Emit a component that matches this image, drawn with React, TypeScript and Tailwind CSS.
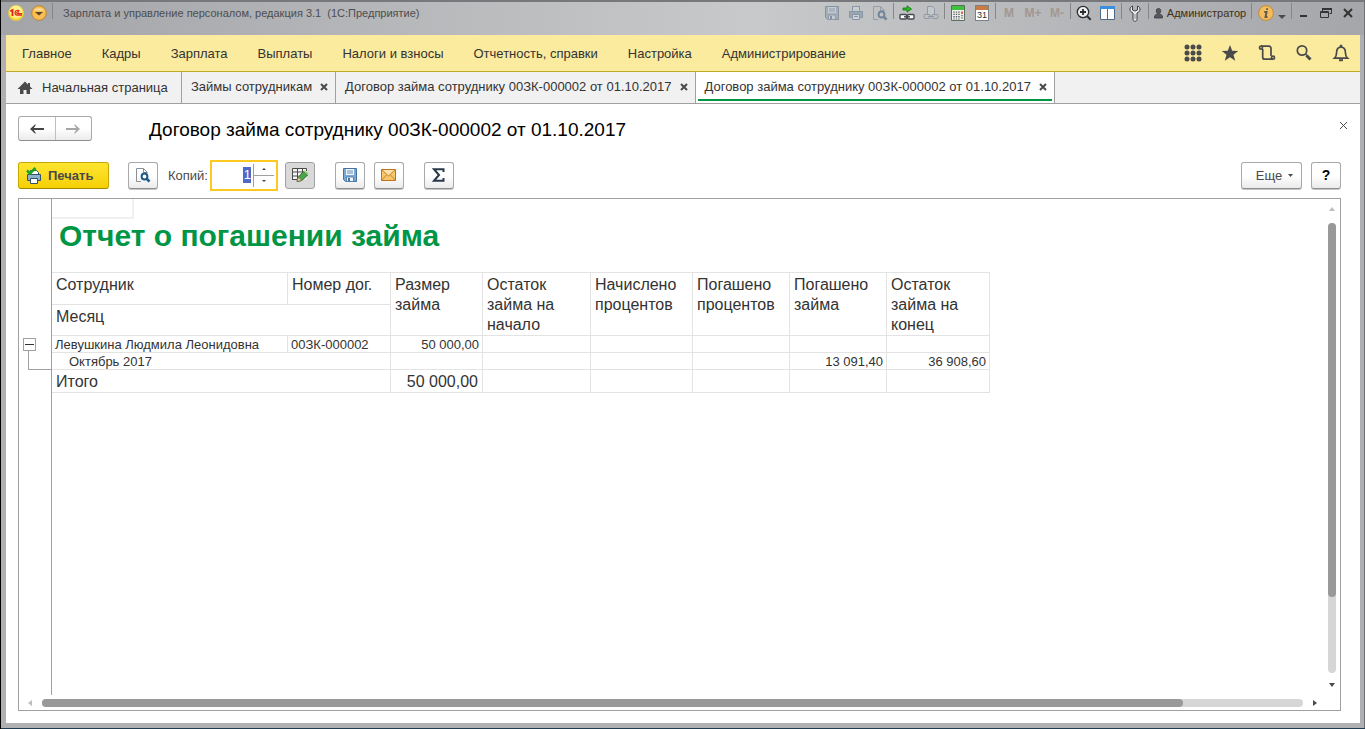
import { ReactNode, useState } from "react";

const SECTIONS = [
  "Главное",
  "Кадры",
  "Зарплата",
  "Выплаты",
  "Налоги и взносы",
  "Отчетность, справки",
  "Настройка",
  "Администрирование",
];

const LOAN = "Договор займа сотруднику 00ЗК-000002 от 01.10.2017";

const TABS = ["Займы сотрудникам", LOAN, LOAN];

const BTN =
  "flex items-center justify-center h-[27px] border border-[#a9a9a9] border-b-[#8f8f8f] rounded-[3px] bg-linear-to-b from-white from-50% to-[#ebebeb] shadow-[0_1px_0_#c4c4c4]";

function Sep() {
  return <span className="w-px h-4 mx-px -mt-1 bg-[#85868a] shrink-0" />;
}

function TitleButton({ label, children }: { label: string; children: ReactNode }) {
  return (
    <button aria-label={label} className="w-6 h-[22px] flex items-center justify-center shrink-0">
      {children}
    </button>
  );
}

function Floppy({ body, dark, paper }: { body: string; dark: string; paper: string }) {
  return (
    <svg width="16" height="16" viewBox="0 0 16 16">
      <path d="M1.5 1.5h13v13h-11l-2-2z" fill={body} stroke={dark} />
      <path d="M4 2h8v6H4z" fill={paper} />
      <path d="M5 4h6M5 6h6" stroke={dark} strokeWidth=".8" />
      <path d="M4.5 10h7v4.500h-7z" fill={paper} stroke={dark} strokeWidth=".8" />
      <path d="M6 11h2v3H6z" fill={dark} />
    </svg>
  );
}

function Sheet({ stroke, lens }: { stroke: string; lens: string }) {
  return (
    <svg width="16" height="16" viewBox="0 0 16 16" fill="none">
      <path d="M6 14.500H1.500v-13h7l4 4V6M8.500 1.500v4h4" stroke={stroke} />
      <circle cx="9.500" cy="9.500" r="2.900" stroke={lens} strokeWidth="2" />
      <path d="M11.500 11.500l3 3.200" stroke={lens} strokeWidth="2.600" />
    </svg>
  );
}

function Printer() {
  return (
    <svg width="16" height="16" viewBox="0 0 16 16" fill="none" stroke="#8795a5">
      <path d="M4.500 5.500v-4h7v4" fill="#c9ced3" />
      <path d="M3.500 12.500h-2v-6h13v6h-2" fill="#9aa6b2" />
      <path d="M4.500 9.500h7v5h-7zM6 11.500h4" fill="#cdd2d6" />
    </svg>
  );
}

function TitleBar() {
  return (
    <header className="h-[35px] shrink-0 flex items-start pl-[7px] pr-[5px] border-t-2 border-[#77787b] bg-linear-to-r from-[#a3a4a8] via-[#c8c9ca] via-55% to-[#a5a6aa]">
      <button aria-label="Меню 1С" className="w-[18px] h-[22px] flex items-center">
        <svg width="16" height="16" viewBox="0 0 16 16">
          <circle cx="8" cy="8" r="7.800" fill="#f5d433" />
          <circle cx="8" cy="7" r="6.500" fill="#fff18a" />
          <path d="M2.300 6.300L4.500 5v6" fill="none" stroke="#e1241b" strokeWidth="1.800" />
          <path
            d="M11.500 6.200A2.500 2.500 0 1 0 9 10.200h5M10.700 7.500A1 1 0 1 0 9.500 8.700H14"
            fill="none"
            stroke="#e1241b"
            strokeWidth="1.200"
          />
        </svg>
      </button>
      <button aria-label="Главное меню" className="ml-[5px] h-[22px] flex items-center">
        <svg width="16" height="16" viewBox="0 0 16 16">
          <circle cx="8" cy="8" r="7.300" fill="#f9bd55" stroke="#b98532" />
          <path d="M3 5.500a5.500 4 0 0 1 10 0" fill="#fde0a0" />
          <path d="M4 7h8l-4 3.500z" fill="#5a4420" />
        </svg>
      </button>
      <span className="w-px h-4 mt-px ml-[5px] bg-[#85868a]" />
      <span className="ml-2.5 text-[11px] leading-[22px] text-[#4c4d50] whitespace-pre">
        Зарплата и управление персоналом, редакция 3.1  (1С:Предприятие)
      </span>

      <div className="ml-auto flex items-center text-[11px]">
        <TitleButton label="Сохранить">
          <Floppy body="#a4afba" dark="#8492a2" paper="#c6cbd0" />
        </TitleButton>
        <TitleButton label="Печать">
          <Printer />
        </TitleButton>
        <TitleButton label="Предварительный просмотр">
          <Sheet stroke="#929eab" lens="#73869a" />
        </TitleButton>
        <Sep />
        <TitleButton label="Получить ссылку">
          <svg width="16" height="16" viewBox="0 0 16 16" fill="none">
            <path d="M4 3h4V.800L12.500 4 8 7.200V5H4z" fill="#25c11a" stroke="#14720c" strokeWidth=".8" />
            <rect x="1" y="9.500" width="6.500" height="4.500" rx="1" fill="#fff" stroke="#45494f" strokeWidth="1.400" />
            <rect x="8.500" y="9.500" width="6.500" height="4.500" rx="1" fill="#fff" stroke="#45494f" strokeWidth="1.400" />
            <path d="M5 11.800h6" stroke="#45494f" strokeWidth="1.400" />
          </svg>
        </TitleButton>
        <TitleButton label="Перейти по ссылке">
          <svg width="16" height="16" viewBox="0 0 16 16" fill="none" stroke="#8f9aa6">
            <path d="M4.500 9V1.500h5l2 2V9" fill="#c3c8cd" />
            <rect x="1" y="9.500" width="6" height="4" rx="1" />
            <rect x="9" y="9.500" width="6" height="4" rx="1" />
            <path d="M5 11.500h6" />
          </svg>
        </TitleButton>
        <Sep />
        <TitleButton label="Калькулятор">
          <svg width="14" height="16" viewBox="0 0 14 16">
            <path d="M.5.5h13v15H.5z" fill="#f0f1ec" stroke="#59705a" />
            <path d="M1 1h12v4H1z" fill="#3fc23d" />
            <path d="M3 6.500v8M5.500 6.500v8M8 6.500v8" stroke="#5b6068" strokeWidth="1.400" strokeDasharray="1.300 1" />
            <path d="M11 6.500v2.500" stroke="#e0372c" strokeWidth="1.500" />
            <path d="M11 10v4.500" stroke="#5b6068" strokeWidth="1.400" strokeDasharray="1.300 1" />
          </svg>
        </TitleButton>
        <TitleButton label="Календарь">
          <span className="w-3.5 h-4 flex flex-col border border-[#7d8087] bg-white text-[9px] leading-[11px] text-[#333] text-center">
            <span className="h-1 shrink-0 bg-[#c87c44]" />
            31
          </span>
        </TitleButton>
        <Sep />
        {["M", "M+", "M-"].map((m) => (
          <button key={m} className="w-6 h-[22px] shrink-0 text-xs font-bold text-[#a3978f]">
            {m}
          </button>
        ))}
        <Sep />
        <TitleButton label="Масштаб">
          <svg width="16" height="16" viewBox="0 0 16 16" fill="none" stroke="#2b2d30">
            <circle cx="7" cy="7" r="5.700" fill="#eceded" strokeWidth="1.300" />
            <path d="M4 7h6M7 4v6" strokeWidth="1.800" />
            <path d="M11.200 11.200l3.500 3.500" strokeWidth="2" />
          </svg>
        </TitleButton>
        <TitleButton label="Панели">
          <svg width="16" height="14" viewBox="0 0 16 14">
            <path d="M.5.5h14v13H.5z" fill="#fff" stroke="#4d6b86" />
            <path d="M0 0h15v3H0z" fill="#3b8fdc" />
            <path d="M7.500 3v10" stroke="#4d6b86" />
          </svg>
        </TitleButton>
        <Sep />
        <TitleButton label="Сервис и настройки">
          <svg width="14" height="17" viewBox="0 0 14 17">
            <path
              d="M4.500 1C2.500 1.800 1.500 3.300 2.200 5.500c.4 1.200 1.500 1.800 2.800 2.500v6.500c0 2.300 4 2.300 4 0V8c1.300-.7 2.400-1.300 2.800-2.500C12.500 3.300 11.500 1.800 9.500 1v4L7 6 4.500 5z"
              fill="#e9eaeb"
              stroke="#3b3e42"
            />
            <path d="M7 9v5" stroke="#83868a" />
          </svg>
        </TitleButton>
        <Sep />
        <button className="flex items-center h-[22px] w-[100px] justify-center gap-1 text-[11px] text-[#3f2f14]">
          <svg width="9" height="11" viewBox="0 0 9 11" fill="#55585c" stroke="#3a3c3f" strokeWidth=".8">
            <path d="M4.500.5c3 0 2.600 3.700 1.200 5 0 1.200 2.800.8 2.800 3.500v1h-8V9c0-2.700 2.800-2.300 2.800-3.500C1.900 4.200 1.500.5 4.500.5z" />
          </svg>
          Администратор
        </button>
        <Sep />
        <button aria-label="Справка" className="flex items-center h-[22px] w-[37px] justify-center gap-1">
          <svg width="16" height="16" viewBox="0 0 16 16">
            <circle cx="8" cy="8" r="7.400" fill="#f5bc5c" stroke="#c08b3a" />
            <path d="M9.300 3.300L9 4.900M6.300 7h2.300l-1.100 5h2" fill="none" stroke="#5c5a55" strokeWidth="1.900" />
          </svg>
          <svg width="8" height="4" viewBox="0 0 8 4" className="mt-2">
            <path d="M0 0h8L4 4z" fill="#4a4b4e" />
          </svg>
        </button>
        <Sep />
        <div className="flex items-center">
          <button aria-label="Свернуть" className="w-[22px] h-[22px] flex items-center justify-center">
            <svg width="8" height="12" viewBox="0 0 8 12">
              <path d="M0 9h7" stroke="#333" strokeWidth="2" />
            </svg>
          </button>
          <button aria-label="Развернуть" className="w-[22px] h-[22px] flex items-center justify-center">
            <svg width="12" height="10" viewBox="0 0 12 10" fill="none" stroke="#333">
              <path d="M2.500 3V.5h9v5h-2" />
              <path d="M2 1h10" strokeWidth="2" />
              <path d="M.5 3.500h8v6h-8zM0 4.500h9" />
            </svg>
          </button>
          <button aria-label="Закрыть" className="w-[22px] h-[22px] flex items-center justify-center">
            <svg width="10" height="10" viewBox="0 0 10 10" stroke="#333" strokeWidth="2">
              <path d="M1 1l8 8M9 1L1 9" />
            </svg>
          </button>
        </div>
      </div>
    </header>
  );
}

function SectionBar() {
  return (
    <nav className="h-[37px] shrink-0 flex items-center justify-between pl-4 pr-2.5 bg-[#fbeb9e] border-b border-[#bda827]">
      <ul className="flex gap-[30px] pt-px text-[13px] text-[#333]">
        {SECTIONS.map((s) => (
          <li key={s}>
            <a href="#" className="whitespace-nowrap">
              {s}
            </a>
          </li>
        ))}
      </ul>
      <div className="flex items-center gap-[19px] text-[#4a4a4a]">
        <button aria-label="Меню функций">
          <svg width="18" height="18" viewBox="0 0 18 18" fill="#4a4a4a">
            {[3, 9, 15].map((y) => [3, 9, 15].map((x) => <circle key={x + "-" + y} cx={x} cy={y} r="2.500" />))}
          </svg>
        </button>
        <button aria-label="Избранное">
          <svg width="18" height="18" viewBox="0 0 18 18" fill="#4a4a4a">
            <path d="M9 1l2.200 5.800 6 .200-4.700 3.700 1.700 6L9 13.300l-5.200 3.400 1.700-6L.800 7l6-.200z" />
          </svg>
        </button>
        <button aria-label="История">
          <svg width="18" height="18" viewBox="0 0 18 18" fill="none" stroke="#4a4a4a" strokeWidth="1.700">
            <path d="M4.700 5v8.200a2 2 0 0 0 2 2H15" />
            <path d="M3 2.200h8a2 2 0 0 1 2 2V12" />
            <circle cx="3" cy="3.700" r="1.500" />
            <circle cx="15" cy="13.700" r="1.500" />
          </svg>
        </button>
        <button aria-label="Поиск">
          <svg width="18" height="18" viewBox="0 0 18 18" fill="none" stroke="#4a4a4a">
            <circle cx="7" cy="6.500" r="4.700" strokeWidth="1.700" />
            <path d="M10.500 10l1.500 1.500" strokeWidth="1.500" />
            <path d="M11.500 11.500l4 4" strokeWidth="3" />
          </svg>
        </button>
        <button aria-label="Оповещения">
          <svg width="18" height="18" viewBox="0 0 18 18" fill="none" stroke="#4a4a4a" strokeWidth="1.700">
            <path d="M2.500 14.200h13c-1.800-1.700-2-2.800-2-5C13.500 5 12 3.200 9 3.200S4.500 5 4.500 9.200c0 2.200-.2 3.300-2 5z" />
            <path d="M9 .8V3" strokeWidth="2.500" />
            <path d="M7 16.200h4" strokeWidth="2" />
          </svg>
        </button>
      </div>
    </nav>
  );
}

function TabBar() {
  const [active, setActive] = useState(2);

  return (
    <div className="h-8 shrink-0 flex bg-[#f1f1f1] text-[13px] text-[#333]">
      <button className="flex items-center gap-[9px] w-44 pl-[11px] border-r border-b border-[#a0a0a0] whitespace-nowrap">
        <svg width="16" height="14" viewBox="0 0 16 14" fill="#4a4a4a">
          <path d="M8 .500L.500 8H3v5h3.500V9h3v4H13V8h2.500L13 5.500V2h-2v1.500z" />
        </svg>
        Начальная страница
      </button>
      {TABS.map((t, i) => (
        <div key={i} className={`flex flex-col px-0.5 border-r border-b border-[#a0a0a0] ${i === active ? "bg-white" : ""}`}>
          <div className="flex-1 flex items-center gap-2 pt-[3px] pl-[7px] pr-[5px]">
            <button onClick={() => setActive(i)} className="whitespace-nowrap">
              {t}
            </button>
            <button aria-label="Закрыть вкладку">
              <svg width="8" height="8" viewBox="0 0 8 8" stroke="#4a4a4a" strokeWidth="2">
                <path d="M1 1l6 6M7 1L1 7" />
              </svg>
            </button>
          </div>
          <div className={`h-0.5 mb-0.5 ${i === active ? "bg-[#009646]" : ""}`} />
        </div>
      ))}
      <div className="flex-1 border-b border-[#a0a0a0]" />
    </div>
  );
}

function Toolbar() {
  const [copies, setCopies] = useState("1");

  return (
    <div className="flex items-center h-[30px] text-[13px] text-[#4a4a4a]">
      <button className="flex items-center gap-1.5 w-[91px] h-[27px] pl-[7px] border border-[#c9a900] border-b-[#a08600] rounded-[3px] bg-linear-to-b from-[#ffe52e] to-[#f5d000] font-bold">
        <svg width="16" height="17" viewBox="0 0 16 17" fill="none">
          <path d="M4.500 8V3.500h6l2 2V8" fill="#fff" stroke="#33506b" />
          <path d="M1.500 13.500v-6h13v6z" fill="#8fb2cc" stroke="#33506b" />
          <path d="M4.500 11.500h7v5h-7z" fill="#fff" stroke="#33506b" />
          <path d="M1 3.500l3 3L9.500 1" stroke="#16a51e" strokeWidth="2.600" />
        </svg>
        <span className="pt-px">Печать</span>
      </button>
      <button aria-label="Просмотр" className={`${BTN} w-[30px] ml-[19px]`}>
        <Sheet stroke="#8a9096" lens="#1c5a85" />
      </button>
      <label htmlFor="copies" className="ml-2.5 pt-px whitespace-nowrap">
        Копий:
      </label>
      <div className="flex w-[68px] h-[31px] ml-0.5 border-2 border-[#fcc921] bg-white">
        <div className="flex-1 flex items-center justify-end">
          <input
            id="copies"
            value={copies}
            onChange={(e) => setCopies(e.target.value)}
            className="w-2 h-4 bg-[#4f69c6] text-white text-right outline-none"
          />
        </div>
        <div className="flex flex-col w-[21px] my-0.5 ml-0.5 mr-0.5 border-l border-[#a0a0a0]">
          <button aria-label="Больше" className="flex-1 flex items-center justify-center border-b border-[#a0a0a0]">
            <svg width="4" height="2" viewBox="0 0 4 2" fill="#444">
              <path d="M0 2h4L2 0z" />
            </svg>
          </button>
          <button aria-label="Меньше" className="flex-1 flex items-center justify-center">
            <svg width="4" height="2" viewBox="0 0 4 2" fill="#444">
              <path d="M0 0h4L2 2z" />
            </svg>
          </button>
        </div>
      </div>
      <button
        aria-label="Редактирование"
        className="flex items-center justify-center w-[30px] h-[27px] ml-[7px] border border-[#a0a0a0] rounded-[3px] bg-[#d9d9d9]"
      >
        <svg width="18" height="16" viewBox="0 0 18 16" fill="none">
          <path d="M1.500 1.500h14v11h-14z" fill="#f4f4f4" />
          <path d="M1.500 13V1.500h14V4M1.500 5h10M1.500 9h6M6.500 1.500V12M11.500 1.500v4M1.500 12.500h5" stroke="#4a4a4a" />
          <path d="M6 14.500l1.500-4.500 5-5.500 4 3.500-5.500 5.500z" fill="#4aa64a" stroke="#28662b" />
          <path d="M6 14.500l1.300-4.200 3.500 3z" fill="#f1d4a8" stroke="#7c6345" strokeWidth=".6" />
          <path d="M12.500 4.500l4 3.500 1-1.500-3.700-3.200z" fill="#8fce7c" />
        </svg>
      </button>
      <button aria-label="Сохранить файл" className={`${BTN} w-[30px] ml-5`}>
        <Floppy body="#7fa8d0" dark="#4274a3" paper="#f1f5f9" />
      </button>
      <button aria-label="Отправить" className={`${BTN} w-[30px] ml-[9px]`}>
        <svg width="15" height="12" viewBox="0 0 15 12">
          <path d="M.5.5h14v11H.5z" fill="#f8c66b" stroke="#b87420" />
          <path d="M1.800 1h11.400L7.500 6.500z" fill="#fde3ad" />
          <path d="M1 1l6.500 6L14 1M1 11l4.500-5M14 11L9.500 6" fill="none" stroke="#b87420" strokeWidth=".8" />
        </svg>
      </button>
      <button aria-label="Сумма" className={`${BTN} w-[30px] ml-5`}>
        <svg width="13" height="14" viewBox="0 0 13 14" fill="none" stroke="#28394a">
          <path d="M11.500 4V1.200H2L7 7l-5 5.800h9.500V10" strokeWidth="2" />
        </svg>
      </button>
      <button className={`${BTN} w-[61px] ml-auto gap-1.5 pl-1.5`}>
        <span className="pt-px">Еще</span>
        <svg width="5" height="3" viewBox="0 0 5 3" fill="#4a4a4a">
          <path d="M0 0h5L2.500 3z" />
        </svg>
      </button>
      <button aria-label="Помощь" className={`${BTN} w-[30px] ml-[9px] text-sm font-bold text-black`}>
        ?
      </button>
    </div>
  );
}

const TH = "border border-[#e3e3e3] px-1 pt-0.5 text-left align-top font-normal";
const TD = "border border-[#e3e3e3] pt-px pl-0.5 pr-[3px] text-right";

function ReportTable() {
  return (
    <table className="table-fixed w-[939px] mt-5 -ml-px border-collapse text-[13px] leading-[15px] text-[#333]">
      <colgroup>
        <col className="w-[236px]" />
        <col className="w-[103px]" />
        <col className="w-[92px]" />
        <col className="w-[108px]" />
        <col className="w-[102px]" />
        <col className="w-[97px]" />
        <col className="w-[97px]" />
        <col className="w-[103px]" />
      </colgroup>
      <thead className="text-base leading-5">
        <tr className="h-8">
          <th className={TH}>Сотрудник</th>
          <th className={`${TH} whitespace-nowrap`}>Номер дог.</th>
          <th rowSpan={2} className={TH}>Размер займа</th>
          <th rowSpan={2} className={TH}>Остаток займа на начало</th>
          <th rowSpan={2} className={TH}>Начислено процентов</th>
          <th rowSpan={2} className={TH}>Погашено процентов</th>
          <th rowSpan={2} className={TH}>Погашено займа</th>
          <th rowSpan={2} className={TH}>Остаток займа на конец</th>
        </tr>
        <tr className="h-[31px]">
          <th colSpan={2} className={TH}>Месяц</th>
        </tr>
      </thead>
      <tbody>
        <tr className="h-[17px]">
          <td className="border border-[#e3e3e3] px-[3px] pt-px">Левушкина Людмила Леонидовна</td>
          <td className="border border-[#e3e3e3] px-[3px] pt-px">00ЗК-000002</td>
          <td className={TD}>50 000,00</td>
          <td className={TD} />
          <td className={TD} />
          <td className={TD} />
          <td className={TD} />
          <td className={TD} />
        </tr>
        <tr className="h-[17px]">
          <td colSpan={2} className="border border-[#e3e3e3] pl-[17px] pt-px">Октябрь 2017</td>
          <td className={TD} />
          <td className={TD} />
          <td className={TD} />
          <td className={TD} />
          <td className={TD}>13 091,40</td>
          <td className={TD}>36 908,60</td>
        </tr>
        <tr className="h-[23px] text-base leading-5">
          <td colSpan={2} className="border border-[#e3e3e3] px-1 pt-0.5">Итого</td>
          <td className="border border-[#e3e3e3] px-1 pt-0.5 text-right">50 000,00</td>
          <td className={TD} />
          <td className={TD} />
          <td className={TD} />
          <td className={TD} />
          <td className={TD} />
        </tr>
      </tbody>
    </table>
  );
}

function Report() {
  return (
    <div className="flex-1 min-h-0 flex flex-col mt-2 border border-[#a0a0a0] bg-white">
      <div className="flex-1 min-h-0 flex">
        {/* grouping gutter */}
        <div className="w-[33px] shrink-0 flex flex-col pt-[139px] pl-1 border-r border-[#a0a0a0]">
          <button
            aria-label="Свернуть группу"
            className="w-[13px] h-[13px] flex items-center justify-center border border-[#a0a0a0] bg-white"
          >
            <span className="w-[9px] h-px bg-[#333]" />
          </button>
          <div className="h-[19px] ml-[5px] border-l border-b border-[#a0a0a0]" />
        </div>

        <div className="flex-1 min-w-0 overflow-hidden">
          <div className="w-[82px] h-5 border-r-2 border-b-2 border-[#f0f0f0]" />
          <h2 className="ml-[7px] mt-px h-8 text-3xl leading-8 font-bold text-[#009646]">Отчет о погашении займа</h2>
          <ReportTable />
        </div>

        <div className="w-4 shrink-0 flex flex-col items-center pt-2">
          <svg width="6" height="4" viewBox="0 0 6 4" fill="#bdbdbd">
            <path d="M0 4h6L3 0z" />
          </svg>
          <div className="flex-1 w-2 mt-3 mb-2.5 rounded-full bg-[#d6d6d6]">
            <div className="h-[83%] rounded-full bg-[#999]" />
          </div>
          <svg width="6" height="4" viewBox="0 0 6 4" fill="#4a4a4a" className="mb-2">
            <path d="M0 0h6L3 4z" />
          </svg>
        </div>
      </div>

      <div className="h-[15px] shrink-0 flex items-center pl-[9px] pr-[23px]">
        <svg width="4" height="6" viewBox="0 0 4 6" fill="#bdbdbd">
          <path d="M4 0v6L0 3z" />
        </svg>
        <div className="flex-1 h-2 ml-2.5 mr-2.5 rounded-full bg-[#d6d6d6]">
          <div className="w-[90.5%] h-2 rounded-full bg-[#999]" />
        </div>
        <svg width="4" height="6" viewBox="0 0 4 6" fill="#4a4a4a">
          <path d="M0 0v6l4-3z" />
        </svg>
      </div>
    </div>
  );
}

export default function App() {
  return (
    <div className="h-screen flex flex-col pl-px bg-black font-['Liberation_Sans',Arial,sans-serif] cursor-default">
      <div className="flex-1 min-h-0 flex flex-col bg-[#b0b0b3] border-r border-[#6f7073]">
        <TitleBar />
        <div className="flex-1 min-h-0 flex flex-col pl-[5px] pr-1 pb-[5px]">
          <SectionBar />
          <TabBar />
          <main className="flex-1 min-h-0 flex flex-col pl-3 pr-[19px] pb-3 bg-white">
            <div className="flex items-start h-[56px] pt-3">
              <div className="flex w-[74px] h-[25px] border border-[#a9a9a9] border-b-[#8f8f8f] rounded-[3px] bg-linear-to-b from-white from-50% to-[#ebebeb]">
                <button aria-label="Назад" className="flex-1 flex items-center justify-center border-r border-[#c0c0c0]">
                  <svg width="14" height="10" viewBox="0 0 14 10" fill="#444">
                    <path d="M0 5l5.500-5v1.500L3.800 4H14v2H3.800l1.700 2.500V10z" />
                  </svg>
                </button>
                <button aria-label="Вперед" className="flex-1 flex items-center justify-center">
                  <svg width="14" height="10" viewBox="0 0 14 10" fill="#a6a6a6">
                    <path d="M14 5L8.500 0v1.500L10.200 4H0v2h10.200L8.500 8.500V10z" />
                  </svg>
                </button>
              </div>
              <h1 className="ml-[57px] text-[19px] leading-[27px] text-black whitespace-nowrap">{LOAN}</h1>
              <button aria-label="Закрыть" className="ml-auto -mr-[7px] mt-[5px]">
                <svg width="9" height="9" viewBox="0 0 9 9" stroke="#4a4a4a">
                  <path d="M1 1l7 7M8 1L1 8" />
                </svg>
              </button>
            </div>
            <Toolbar />
            <Report />
          </main>
        </div>
      </div>
      <div className="h-px shrink-0 bg-[#1f3b52]" />
    </div>
  );
}
